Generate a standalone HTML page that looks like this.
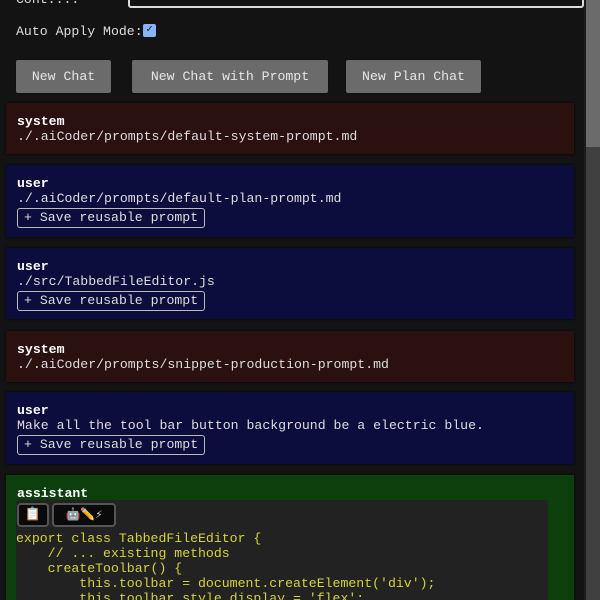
<!DOCTYPE html>
<html><head><style>
html,body{margin:0;padding:0;background:#131313;width:600px;height:600px;overflow:hidden;font-family:"Liberation Mono",monospace;font-size:13.2px;color:#ddd;position:relative}
.abs{position:absolute}
.box{position:absolute;left:6px;width:568px;box-sizing:border-box;padding:11px 11px;line-height:15px;box-shadow:0 0 2px #000}
.sys{background:#2b1010}
.usr{background:#0d0d3d}
.asst{background:#0d3f0d}
b{color:#fff}
.save{display:inline-block;border:1px solid #bbb;border-radius:3px;padding:1px 6px 1px 6px;line-height:16px;margin-top:2px;color:#ddd}
.btn{position:absolute;top:60px;height:33px;background:#6b6b6b;border-radius:2px;color:#e6e6e6;line-height:33px;text-align:center;box-shadow:0 0 1px #000}
pre{margin:0;font-family:"Liberation Mono",monospace;font-size:13.2px;line-height:15px;color:#d4d43a}
.tb{position:absolute;top:503px;height:24px;background:#0a0a0a;border:2px solid #555;border-radius:4px;box-sizing:border-box}
</style></head><body>
<div class="abs" style="left:0;top:0;width:600px;height:600px;overflow:hidden">
<div class="abs" style="left:16px;top:-8px;color:#ddd">Cont...:</div>
<div class="abs" style="left:128px;top:-10px;width:452px;height:14px;border:2px solid #ddd;border-radius:3px;background:#131313"></div>
<div class="abs" style="left:16px;top:24px">Auto Apply Mode:</div>
<div class="abs" style="left:143px;top:24px;width:13px;height:13px;background:#8ab4f8;border-radius:2px;color:#123;font-size:11px;line-height:13px;text-align:center">✓</div>
<div class="btn" style="left:16px;width:95px">New Chat</div>
<div class="btn" style="left:132px;width:196px">New Chat with Prompt</div>
<div class="btn" style="left:346px;width:135px">New Plan Chat</div>

<div class="box sys" style="top:103px;height:51px"><b>system</b><br>./.aiCoder/prompts/default-system-prompt.md</div>
<div class="box usr" style="top:165px;height:72px"><b>user</b><br>./.aiCoder/prompts/default-plan-prompt.md<br><span class="save">+ Save reusable prompt</span></div>
<div class="box usr" style="top:248px;height:71px"><b>user</b><br>./src/TabbedFileEditor.js<br><span class="save">+ Save reusable prompt</span></div>
<div class="box sys" style="top:331px;height:51px"><b>system</b><br>./.aiCoder/prompts/snippet-production-prompt.md</div>
<div class="box usr" style="top:392px;height:72px"><b>user</b><br>Make all the tool bar button background be a electric blue.<br><span class="save">+ Save reusable prompt</span></div>
<div class="box asst" style="top:475px;height:140px"><b>assistant</b></div>
<div class="abs" style="left:16px;top:500px;width:532px;height:110px;background:#222;border-radius:3px"></div>
<div class="tb" style="left:17px;width:32px;text-align:center;font-size:13px;line-height:20px">📋</div>
<div class="tb" style="left:52px;width:64px;text-align:center;font-size:12px;line-height:20px">🤖✏️⚡</div>
<pre class="abs" style="left:16px;top:531px">export class TabbedFileEditor {
    // ... existing methods
    createToolbar() {
        this.toolbar = document.createElement('div');
        this.toolbar.style.display = 'flex';</pre>
<div class="abs" style="left:584px;top:0;width:2px;height:600px;background:#1c1c1c"></div>
<div class="abs" style="left:586px;top:0;width:14px;height:600px;background:#404040"></div>
<div class="abs" style="left:586px;top:0;width:14px;height:147px;background:#6b6b6b"></div>
</div>
</body></html>
